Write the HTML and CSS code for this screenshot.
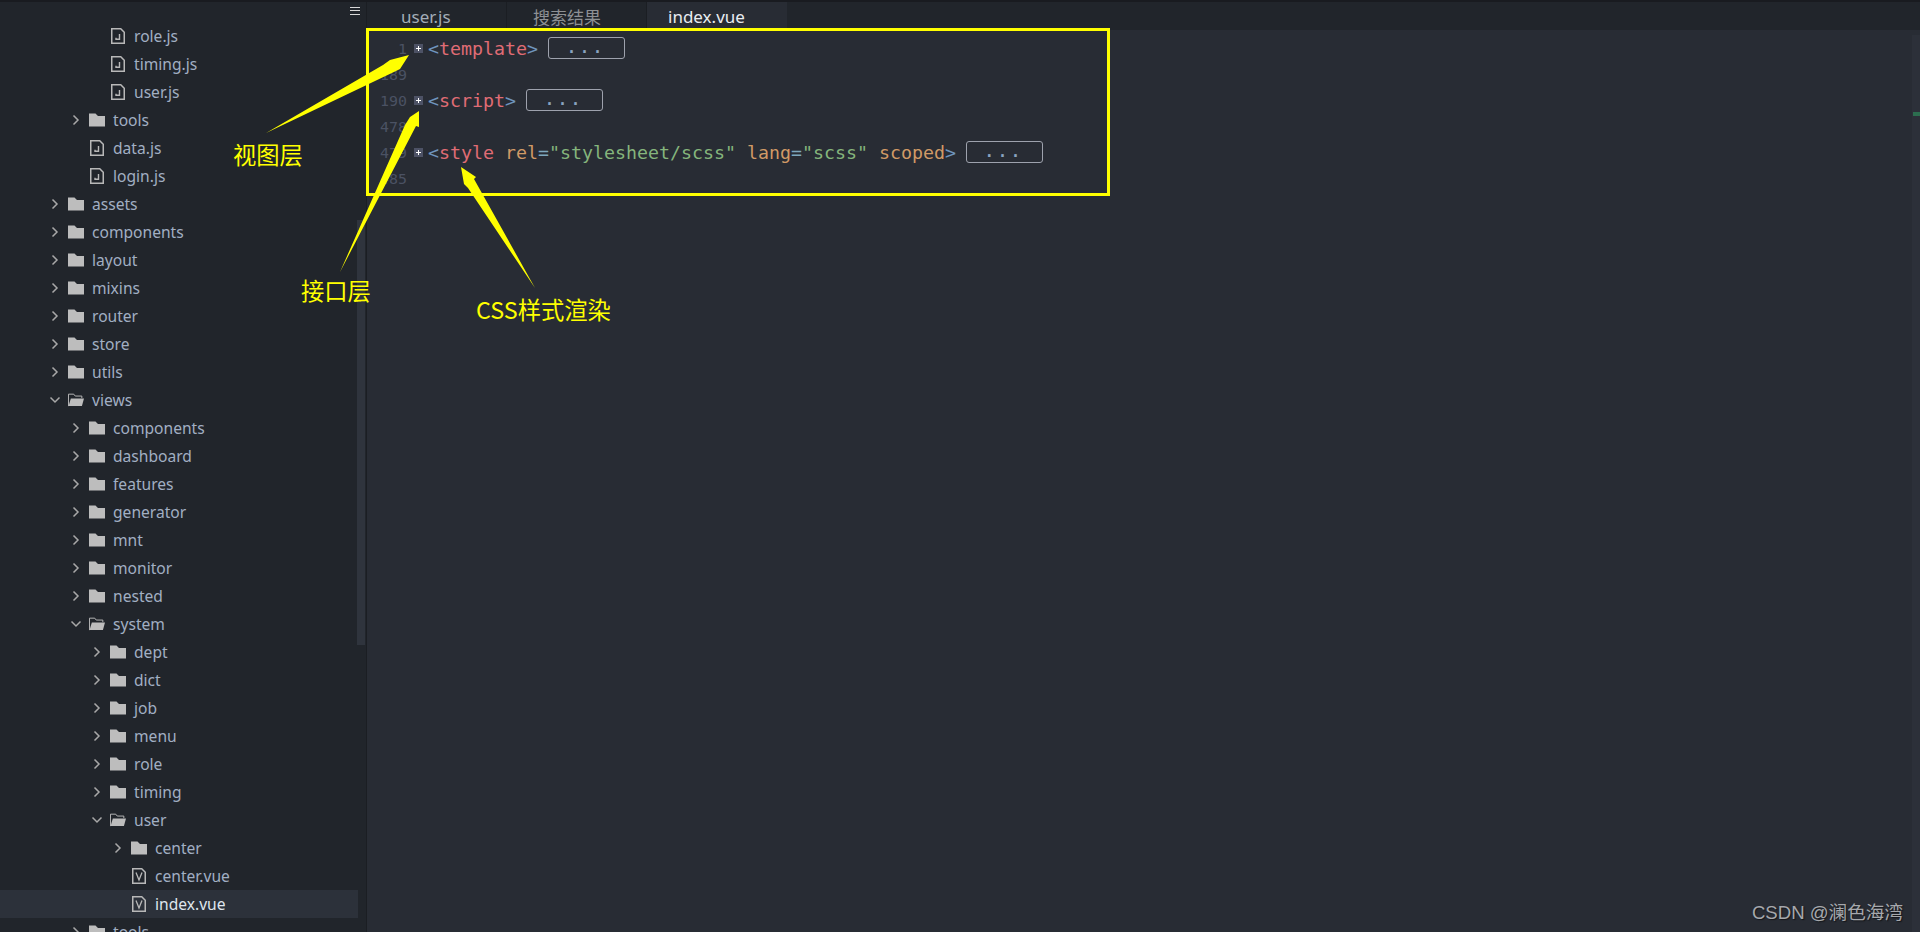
FILE: index.html
```html
<!DOCTYPE html>
<html lang="zh">
<head>
<meta charset="utf-8">
<title>index.vue</title>
<link rel="stylesheet" href="styles.css">
</head>
<body>
<svg class="defs" width="0" height="0" aria-hidden="true">
  <symbol id="chev-r" viewBox="0 0 8 12"><path d="M1.5 1.5 6 6l-4.5 4.5" fill="none" stroke="#a8a8a8" stroke-width="1.5"/></symbol>
  <symbol id="chev-d" viewBox="0 0 12 8"><path d="M1.5 1.5 6 6l4.5-4.5" fill="none" stroke="#a8a8a8" stroke-width="1.5"/></symbol>
  <symbol id="folder" viewBox="0 0 16 14"><path d="M0 0.5h6.5L9 3h7v10.5H0z" fill="#bdbdbd"/></symbol>
  <symbol id="folder-open" viewBox="0 0 17 14"><path d="M.5 13.5V.8h5.6l1.6 2h7v2.2" fill="none" stroke="#bdbdbd"/><path d="M3 5.5h14l-2.2 8H.6z" fill="#bdbdbd"/></symbol>
  <symbol id="file-js" viewBox="0 0 14 16"><path d="M.75.75h9l3.5 3.5v11h-12.5z" fill="none" stroke="#b8b8b8" stroke-width="1.5"/><path d="M8.5 6v5.2H5v-1.4" fill="none" stroke="#b8b8b8" stroke-width="1.4"/></symbol>
  <symbol id="file-vue" viewBox="0 0 14 16"><path d="M.75.75h9l3.5 3.5v11h-12.5z" fill="none" stroke="#b8b8b8" stroke-width="1.5"/><path d="M4 4.5 7 12l3-7.5" fill="none" stroke="#b8b8b8" stroke-width="1.3"/></symbol>
</svg>

<div class="app">
  <aside class="sidebar">
    <div class="side-head">
      <div class="burger"><i></i><i></i><i></i></div>
    </div>
    <ul class="tree">
      <li class="row d3"><span class="twist"></span><svg class="ic-file"><use href="#file-js"/></svg><span>role.js</span></li>
      <li class="row d3"><span class="twist"></span><svg class="ic-file"><use href="#file-js"/></svg><span>timing.js</span></li>
      <li class="row d3"><span class="twist"></span><svg class="ic-file"><use href="#file-js"/></svg><span>user.js</span></li>
      <li class="row d2"><span class="twist"><svg class="ic-r"><use href="#chev-r"/></svg></span><svg class="ic-folder"><use href="#folder"/></svg><span>tools</span></li>
      <li class="row d2"><span class="twist"></span><svg class="ic-file"><use href="#file-js"/></svg><span>data.js</span></li>
      <li class="row d2"><span class="twist"></span><svg class="ic-file"><use href="#file-js"/></svg><span>login.js</span></li>
      <li class="row d1"><span class="twist"><svg class="ic-r"><use href="#chev-r"/></svg></span><svg class="ic-folder"><use href="#folder"/></svg><span>assets</span></li>
      <li class="row d1"><span class="twist"><svg class="ic-r"><use href="#chev-r"/></svg></span><svg class="ic-folder"><use href="#folder"/></svg><span>components</span></li>
      <li class="row d1"><span class="twist"><svg class="ic-r"><use href="#chev-r"/></svg></span><svg class="ic-folder"><use href="#folder"/></svg><span>layout</span></li>
      <li class="row d1"><span class="twist"><svg class="ic-r"><use href="#chev-r"/></svg></span><svg class="ic-folder"><use href="#folder"/></svg><span>mixins</span></li>
      <li class="row d1"><span class="twist"><svg class="ic-r"><use href="#chev-r"/></svg></span><svg class="ic-folder"><use href="#folder"/></svg><span>router</span></li>
      <li class="row d1"><span class="twist"><svg class="ic-r"><use href="#chev-r"/></svg></span><svg class="ic-folder"><use href="#folder"/></svg><span>store</span></li>
      <li class="row d1"><span class="twist"><svg class="ic-r"><use href="#chev-r"/></svg></span><svg class="ic-folder"><use href="#folder"/></svg><span>utils</span></li>
      <li class="row d1"><span class="twist"><svg class="ic-d"><use href="#chev-d"/></svg></span><svg class="ic-folder"><use href="#folder-open"/></svg><span>views</span></li>
      <li class="row d2"><span class="twist"><svg class="ic-r"><use href="#chev-r"/></svg></span><svg class="ic-folder"><use href="#folder"/></svg><span>components</span></li>
      <li class="row d2"><span class="twist"><svg class="ic-r"><use href="#chev-r"/></svg></span><svg class="ic-folder"><use href="#folder"/></svg><span>dashboard</span></li>
      <li class="row d2"><span class="twist"><svg class="ic-r"><use href="#chev-r"/></svg></span><svg class="ic-folder"><use href="#folder"/></svg><span>features</span></li>
      <li class="row d2"><span class="twist"><svg class="ic-r"><use href="#chev-r"/></svg></span><svg class="ic-folder"><use href="#folder"/></svg><span>generator</span></li>
      <li class="row d2"><span class="twist"><svg class="ic-r"><use href="#chev-r"/></svg></span><svg class="ic-folder"><use href="#folder"/></svg><span>mnt</span></li>
      <li class="row d2"><span class="twist"><svg class="ic-r"><use href="#chev-r"/></svg></span><svg class="ic-folder"><use href="#folder"/></svg><span>monitor</span></li>
      <li class="row d2"><span class="twist"><svg class="ic-r"><use href="#chev-r"/></svg></span><svg class="ic-folder"><use href="#folder"/></svg><span>nested</span></li>
      <li class="row d2"><span class="twist"><svg class="ic-d"><use href="#chev-d"/></svg></span><svg class="ic-folder"><use href="#folder-open"/></svg><span>system</span></li>
      <li class="row d3"><span class="twist"><svg class="ic-r"><use href="#chev-r"/></svg></span><svg class="ic-folder"><use href="#folder"/></svg><span>dept</span></li>
      <li class="row d3"><span class="twist"><svg class="ic-r"><use href="#chev-r"/></svg></span><svg class="ic-folder"><use href="#folder"/></svg><span>dict</span></li>
      <li class="row d3"><span class="twist"><svg class="ic-r"><use href="#chev-r"/></svg></span><svg class="ic-folder"><use href="#folder"/></svg><span>job</span></li>
      <li class="row d3"><span class="twist"><svg class="ic-r"><use href="#chev-r"/></svg></span><svg class="ic-folder"><use href="#folder"/></svg><span>menu</span></li>
      <li class="row d3"><span class="twist"><svg class="ic-r"><use href="#chev-r"/></svg></span><svg class="ic-folder"><use href="#folder"/></svg><span>role</span></li>
      <li class="row d3"><span class="twist"><svg class="ic-r"><use href="#chev-r"/></svg></span><svg class="ic-folder"><use href="#folder"/></svg><span>timing</span></li>
      <li class="row d3"><span class="twist"><svg class="ic-d"><use href="#chev-d"/></svg></span><svg class="ic-folder"><use href="#folder-open"/></svg><span>user</span></li>
      <li class="row d4"><span class="twist"><svg class="ic-r"><use href="#chev-r"/></svg></span><svg class="ic-folder"><use href="#folder"/></svg><span>center</span></li>
      <li class="row d4"><span class="twist"></span><svg class="ic-file"><use href="#file-vue"/></svg><span>center.vue</span></li>
      <li class="row d4 selected"><span class="twist"></span><svg class="ic-file"><use href="#file-vue"/></svg><span>index.vue</span></li>
      <li class="row d2"><span class="twist"><svg class="ic-r"><use href="#chev-r"/></svg></span><svg class="ic-folder"><use href="#folder"/></svg><span>tools</span></li>
    </ul>
    <div class="side-scroll"></div>
  </aside>

  <main class="editor">
    <nav class="tabs">
      <div class="tab tab-js">user.js</div>
      <div class="tab tab-search">搜索结果</div>
      <div class="tab active">index.vue</div>
    </nav>
    <div class="code">
      <div class="line"><span class="ln">1</span><span class="fold"></span><code><span class="br">&lt;</span><span class="tag">template</span><span class="br">&gt;</span></code><span class="ell">...</span></div>
      <div class="line"><span class="ln">189</span></div>
      <div class="line"><span class="ln">190</span><span class="fold"></span><code><span class="br">&lt;</span><span class="tag">script</span><span class="br">&gt;</span></code><span class="ell">...</span></div>
      <div class="line"><span class="ln">478</span></div>
      <div class="line"><span class="ln">479</span><span class="fold"></span><code><span class="br">&lt;</span><span class="tag">style</span> <span class="attr">rel</span><span class="eq">=</span><span class="str">"stylesheet/scss"</span> <span class="attr">lang</span><span class="eq">=</span><span class="str">"scss"</span> <span class="attr">scoped</span><span class="br">&gt;</span></code><span class="ell">...</span></div>
      <div class="line"><span class="ln">485</span></div>
    </div>
    <div class="ruler"><i class="ruler-mark"></i></div>
    <div class="watermark">CSDN @澜色海湾</div>
  </main>
</div>

<svg class="marks" width="1920" height="932" viewBox="0 0 1920 932" aria-hidden="true">
  <rect class="frame" x="367.5" y="29.5" width="741" height="165"/>
  <polygon class="arrow" points="266,133 383,65 390,60 409,55 400,69 396,71"/>
  <polygon class="arrow" points="340,272 405,125 410,117 419,111 419,127 416,126"/>
  <polygon class="arrow" points="535,288 468,188 464,184 461,167 476,177 474,179"/>
</svg>
<div class="note note-view">视图层</div>
<div class="note note-api">接口层</div>
<div class="note note-css">CSS样式渲染</div>
</body>
</html>
```

FILE: styles.css
```css
* { box-sizing: border-box; }
html, body { margin: 0; height: 100%; overflow: hidden; background: #282c34; }
ul { list-style: none; margin: 0; padding: 0; }
.defs { position: absolute; }

.app { display: flex; height: 932px; overflow: hidden; border-top: 2px solid #191b20; }

/* sidebar */
.sidebar { position: relative; width: 367px; flex: none; background: #21252b; border-right: 1px solid #1b1e23; overflow: hidden; font: 15.6px "Noto Sans", sans-serif; color: #a1afc3; }
.side-head { height: 20px; display: flex; justify-content: flex-end; align-items: flex-start; padding: 5px 6px 0 0; }
.burger { width: 10px; display: flex; flex-direction: column; gap: 2.4px; }
.burger i { display: block; height: 1px; background: #d8d8d8; }
.tree { width: 358px; }
.row { display: flex; align-items: center; height: 28px; white-space: nowrap; }
.d1 { padding-left: 49px; }
.d2 { padding-left: 70px; }
.d3 { padding-left: 91px; }
.d4 { padding-left: 112px; }
.twist { width: 19px; flex: none; display: flex; align-items: center; padding-left: 2px; }
.ic-r { width: 8px; height: 12px; }
.ic-d { width: 12px; height: 8px; margin-left: -2px; }
.ic-folder { width: 16px; height: 14px; flex: none; margin-right: 8px; }
.ic-file { width: 14px; height: 16px; flex: none; margin: 0 9px 0 1px; }
.selected { background: #2c313a; color: #dfe6ee; }
.side-scroll { position: absolute; right: 1px; top: 218px; width: 8px; height: 425px; background: #2f343d; }

/* editor */
.editor { position: relative; flex: 1; min-width: 0; }
.tabs { display: flex; height: 28px; background: #21252b; font: 17px "Noto Sans", "Noto Sans CJK SC", sans-serif; }
.tab { width: 140px; display: flex; align-items: center; justify-content: flex-start; border-right: 1px solid #1b1e23; }
.tab-js { padding-left: 34px; color: #a3adb8; }
.tab-search { padding-left: 26px; color: #8d9094; }
.active { padding-left: 21px; background: #282c34; color: #e8ecf1; border-right: 0; }

.code { padding-top: 6px; font: 18.27px/26px "DejaVu Sans Mono", monospace; color: #abb2bf; }
.line { display: flex; align-items: center; height: 26px; white-space: pre; }
.ln { width: 40px; flex: none; text-align: right; font-size: 14.95px; color: #4b5263; margin-right: 7px; }
.fold { position: relative; width: 9px; height: 9px; flex: none; background: #4d5265; margin-right: 5px; top: -1px; }
.fold::before { content: ""; position: absolute; left: 2px; top: 4px; width: 5px; height: 1px; background: #fff; }
.fold::after { content: ""; position: absolute; left: 4px; top: 2px; width: 1px; height: 5px; background: #fff; }
code { font: inherit; }
.br { color: #6f94bd; }
.tag { color: #e06c75; }
.attr { color: #d19a66; }
.eq { color: #7ea7bd; }
.str { color: #85b57c; }
.ell { position: relative; top: -1px; width: 77px; height: 22px; flex: none; margin-left: 10px; display: flex; align-items: center; justify-content: center; border: 1px solid #9ea2ad; border-radius: 3px; font-size: 15px; font-weight: bold; line-height: 16px; letter-spacing: 4px; color: #8aa3c0; }

.ruler { position: absolute; right: 0; top: 33px; bottom: 0; width: 8px; background: #2c3039; }
.ruler-mark { position: absolute; right: 0; top: 77px; width: 7px; height: 4px; background: #2c6e4f; }
.watermark { position: absolute; right: 17px; bottom: 7px; font: 18.6px/24px "Liberation Sans", "Noto Sans CJK SC", sans-serif; color: #a6a8ac; text-shadow: 1px 1px 1px #14161a; }

/* annotations */
.marks { position: absolute; left: 0; top: 0; pointer-events: none; }
.frame { fill: none; stroke: #ffff00; stroke-width: 3; }
.arrow { fill: #ffff00; }
.note { position: absolute; font: 23.3px/28px "Noto Sans CJK SC", sans-serif; color: #ffff00; white-space: nowrap; }
.note-view { left: 233px; top: 140px; }
.note-api { left: 301px; top: 276px; }
.note-css { left: 476px; top: 295px; }
```
